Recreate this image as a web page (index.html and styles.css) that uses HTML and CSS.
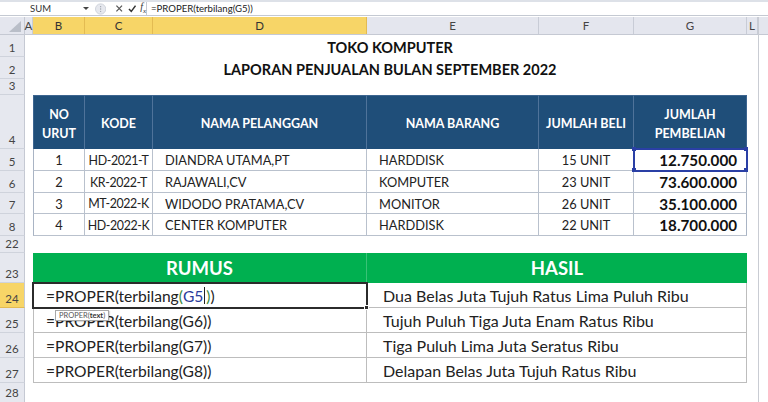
FILE: index.html
```html
<!DOCTYPE html>
<html>
<head>
<meta charset="utf-8">
<link rel="stylesheet" href="styles.css">
</head>
<body>
<div class="fbar">
  <div class="namebox"><span class="nb-text">SUM</span><span class="nb-arrow"></span></div>
  <div class="fbtns">
    <svg class="grip" width="12" height="12" viewBox="0 0 12 12"><circle cx="6" cy="6" r="5.5" fill="#e6e8ee" stroke="#cfd3db"/><circle cx="6" cy="3.5" r="0.7" fill="#9aa0aa"/><circle cx="6" cy="6" r="0.7" fill="#9aa0aa"/><circle cx="6" cy="8.5" r="0.7" fill="#9aa0aa"/></svg>
    <svg class="ico" width="9" height="9" viewBox="0 0 9 9"><path d="M1.5 1.5 L7.5 7.5 M7.5 1.5 L1.5 7.5" stroke="#555" stroke-width="1.3" fill="none"/></svg>
    <svg class="ico" width="9" height="9" viewBox="0 0 9 9"><path d="M1 5 L3.5 7.5 L8 1.5" stroke="#333" stroke-width="1.5" fill="none"/></svg>
    <span class="fx">f<sub>x</sub></span>
  </div>
  <div class="formula">=PROPER(terbilang(G5))</div>
</div>

<div class="sheet">
  <div class="grid">
    <div class="colhdr">
      <div class="corner"><svg width="25" height="18" viewBox="0 0 25 18"><path d="M9 15 L21 15 L21 4 Z" fill="#b9bec8"/></svg></div>
      <div class="ch wA">A</div>
      <div class="ch wB on">B</div>
      <div class="ch wC on">C</div>
      <div class="ch wD on">D</div>
      <div class="ch wE">E</div>
      <div class="ch wF">F</div>
      <div class="ch wG">G</div>
      <div class="ch wL">L</div>
    </div>

    <div class="row h22"><div class="rh">1</div><div class="wA"></div><div class="title wBG">TOKO KOMPUTER</div></div>
    <div class="row h22"><div class="rh">2</div><div class="wA"></div><div class="title wBG">LAPORAN PENJUALAN BULAN SEPTEMBER 2022</div></div>
    <div class="row h16"><div class="rh">3</div></div>

    <div class="row h54">
      <div class="rh">4</div><div class="wA"></div>
      <div class="th wB first">NO<br>URUT</div>
      <div class="th wC">KODE</div>
      <div class="th wD">NAMA PELANGGAN</div>
      <div class="th wE">NAMA BARANG</div>
      <div class="th wF">JUMLAH BELI</div>
      <div class="th wG last">JUMLAH<br>PEMBELIAN</div>
    </div>

    <div class="row h22">
      <div class="rh">5</div><div class="wA"></div>
      <div class="td wB first c">1</div>
      <div class="td wC c code">HD-2021-T</div>
      <div class="td wD l">DIANDRA UTAMA,PT</div>
      <div class="td wE l">HARDDISK</div>
      <div class="td wF c">15 UNIT</div>
      <div class="td wG num ref">12.750.000<span class="hd h1"></span><span class="hd h2"></span><span class="hd h3"></span><span class="hd h4"></span></div>
    </div>
    <div class="row h22">
      <div class="rh">6</div><div class="wA"></div>
      <div class="td wB first c">2</div>
      <div class="td wC c code">KR-2022-T</div>
      <div class="td wD l">RAJAWALI,CV</div>
      <div class="td wE l">KOMPUTER</div>
      <div class="td wF c">23 UNIT</div>
      <div class="td wG num">73.600.000</div>
    </div>
    <div class="row h21">
      <div class="rh">7</div><div class="wA"></div>
      <div class="td wB first c">3</div>
      <div class="td wC c code">MT-2022-K</div>
      <div class="td wD l">WIDODO PRATAMA,CV</div>
      <div class="td wE l">MONITOR</div>
      <div class="td wF c">26 UNIT</div>
      <div class="td wG num">35.100.000</div>
    </div>
    <div class="row h22">
      <div class="rh">8</div><div class="wA"></div>
      <div class="td wB first c">4</div>
      <div class="td wC c code">HD-2022-K</div>
      <div class="td wD l">CENTER KOMPUTER</div>
      <div class="td wE l">HARDDISK</div>
      <div class="td wF c">22 UNIT</div>
      <div class="td wG num">18.700.000</div>
    </div>

    <div class="row h17"><div class="rh">22</div></div>

    <div class="row h30">
      <div class="rh">23</div><div class="wA"></div>
      <div class="gh wBD">RUMUS</div>
      <div class="gh wEG">HASIL</div>
    </div>
    <div class="row h25">
      <div class="rh on">24</div><div class="wA"></div>
      <div class="fc wBD first sel">=PROPER(terbilang<span class="pg">(</span><span class="refc">G5</span><span class="caret"></span><span class="pg">)</span>)<div class="tip">PROPER(<b>text</b>)</div><span class="fill"></span></div>
      <div class="rc wEG">Dua Belas Juta Tujuh Ratus Lima Puluh Ribu</div>
    </div>
    <div class="row h25">
      <div class="rh">25</div><div class="wA"></div>
      <div class="fc wBD first">=PROPER(terbilang(G6))</div>
      <div class="rc wEG">Tujuh Puluh Tiga Juta Enam Ratus Ribu</div>
    </div>
    <div class="row h25">
      <div class="rh">26</div><div class="wA"></div>
      <div class="fc wBD first">=PROPER(terbilang(G7))</div>
      <div class="rc wEG">Tiga Puluh Lima Juta Seratus Ribu</div>
    </div>
    <div class="row h25">
      <div class="rh">27</div><div class="wA"></div>
      <div class="fc wBD first">=PROPER(terbilang(G8))</div>
      <div class="rc wEG">Delapan Belas Juta Tujuh Ratus Ribu</div>
    </div>
    <div class="row h19"><div class="rh">28</div></div>
  </div>
  <div class="edge"><div class="edge-hdr"></div></div>
</div>
</body>
</html>
```
FILE: styles.css
```css
* { box-sizing: border-box; }
body {
  margin: 0;
  width: 768px;
  height: 402px;
  overflow: hidden;
  background: #fff;
  font-family: Lato, "Open Sans", sans-serif;
  color: #222;
}

/* formula bar */
.fbar {
  height: 17px;
  background: #dde1e8;
  padding-top: 2px;
  display: flex;
  border-bottom: 1px solid #fff;
}
.namebox {
  width: 93px;
  background: #fff;
  display: flex;
  align-items: center;
  padding-left: 30px;
  border-bottom: 1px solid #c4c9d2;
}
.nb-text { font-size: 9.5px; color: #333; }
.nb-arrow {
  margin-left: auto;
  margin-right: 4px;
  width: 0; height: 0;
  border-left: 3px solid transparent;
  border-right: 3px solid transparent;
  border-top: 3px solid #444;
}
.fbtns {
  width: 54px;
  display: flex;
  align-items: center;
  gap: 4px;
  padding-left: 2px;
  background: #fff;
  border-bottom: 1px solid #c4c9d2;
  border-right: 1px solid #c4c9d2;
}
.grip { margin-right: 5px; }
.fx { font-family: "Liberation Serif", serif; font-style: italic; font-size: 10px; color: #333; line-height: 1; }
.fx sub { font-size: 7px; }
.formula {
  flex: 1;
  background: #fff;
  font-size: 9.6px;
  padding-left: 4px;
  display: flex;
  align-items: center;
  border-bottom: 1px solid #c4c9d2;
  color: #222;
  white-space: nowrap;
}

/* sheet */
.sheet { display: flex; }
.grid { width: 758px; }
.edge { flex: 1; border-left: 1px solid #c9ccd3; }
.edge-hdr { height: 18px; background: #e4e6ee; border-bottom: 1px solid #c5c9d3; }

.colhdr {
  display: flex;
  height: 18px;
  background: #e4e6ee;
  border-bottom: 1px solid #c5c9d3;
}
.corner { width: 25px; border-right: 1px solid #c5c9d3; }
.corner svg { display: block; }
.ch {
  font-size: 11.5px;
  color: #444;
  display: flex;
  align-items: center;
  justify-content: center;
  border-right: 1px solid #c8ccd6;
}
.ch.on { background: #f7d567; border-right-color: #e3bb52; color: #333; }

.wA { width: 8px; flex: none; }
.wB { width: 52px; flex: none; }
.wC { width: 68px; flex: none; }
.wD { width: 214px; flex: none; }
.wE { width: 172px; flex: none; }
.wF { width: 95px; flex: none; }
.wG { width: 113px; flex: none; }
.wL { width: 11px; flex: none; }
.wBG { width: 714px; flex: none; }
.wBD { width: 334px; flex: none; }
.wEG { width: 380px; flex: none; }

.row { display: flex; white-space: nowrap; }
.h16 { height: 16px; }
.h17 { height: 17px; }
.h19 { height: 19px; }
.h21 { height: 21px; }
.h22 { height: 22px; }
.h25 { height: 25px; }
.h30 { height: 30px; }
.h54 { height: 54px; }

.rh {
  width: 25px;
  flex: none;
  background: #e6e8ef;
  border-right: 1px solid #c5c9d3;
  border-bottom: 1px solid #cfd3dc;
  font-size: 11.5px;
  color: #444;
  display: flex;
  align-items: flex-end;
  justify-content: center;
  line-height: 16px;
}
.h19 .rh { border-bottom: none; line-height: 18px; }
.rh.on { background: #f7d567; border-bottom-color: #e3bb52; }

.title {
  font-weight: 700;
  font-size: 14.5px;
  color: #111;
  display: flex;
  align-items: center;
  justify-content: center;
  padding-top: 3px;
}

/* blue table */
.th {
  background: #1f4e79;
  color: #fff;
  font-weight: 700;
  font-size: 12.5px;
  line-height: 19px;
  text-align: center;
  display: flex;
  align-items: center;
  justify-content: center;
  border-right: 1px solid #4f739a;
  border-top: 1px solid #3d6590;
  padding-top: 2px;
}
.th.first { border-left: 1px solid #3d6590; }
.th.last { border-right: 1px solid #3d6590; }

.td {
  font-size: 12.8px;
  color: #222;
  display: flex;
  align-items: center;
  border-right: 1px solid #b9c1cd;
  border-bottom: 1px solid #b9c1cd;
  padding-top: 1px;
}
.td.first { border-left: 1px solid #a9b4c4; }
.td.c { justify-content: center; }
.td.code { letter-spacing: -0.4px; font-size: 12.4px; }
.td.l { padding-left: 12px; }
.td.num {
  justify-content: flex-end;
  padding-right: 9px;
  font-weight: 700;
  font-size: 15.2px;
  color: #111;
  border-right-color: #a9b4c4;
}
.ref { position: relative; outline: 2px solid #2a3fa5; outline-offset: -1px; }
.hd { position: absolute; width: 4px; height: 4px; background: #2a3fa5; }
.h1 { left: -2px; top: -2px; }
.h2 { right: -2px; top: -2px; }
.h3 { left: -2px; bottom: -2px; }
.h4 { right: -2px; bottom: -2px; }

/* green table */
.gh {
  background: #00b050;
  color: #fff;
  font-weight: 700;
  font-size: 18.5px;
  display: flex;
  align-items: center;
  justify-content: center;
  border-right: 1px solid #39c277;
}
.gh:last-child { border-right: none; }
.fc {
  font-size: 15.6px;
  color: #222;
  display: flex;
  align-items: center;
  padding-left: 12px;
  border-right: 1px solid #bdbdbd;
  border-bottom: 1px solid #bdbdbd;
  padding-top: 1px;
}
.fc.first { border-left: 1px solid #bdbdbd; }
.rc {
  font-size: 16px;
  color: #222;
  display: flex;
  align-items: center;
  padding-left: 16px;
  border-right: 1px solid #bdbdbd;
  border-bottom: 1px solid #bdbdbd;
  padding-top: 1px;
}
.sel { position: relative; outline: 2px solid #2b2b2b; outline-offset: -1px; }
.refc { color: #2c3c9c; }
.pg { color: #3b8a3b; }
.caret { display: inline-block; width: 1px; height: 17px; background: #222; margin: 0 1px 0 1px; }
.fill { position: absolute; right: -3px; bottom: -3px; width: 5px; height: 5px; background: #2b2b2b; border: 1px solid #fff; }
.tip {
  position: absolute;
  left: 21px;
  top: 27px;
  height: 11px;
  padding: 0 3px;
  background: #fff;
  border: 1px solid #a8a8a8;
  font-size: 7.5px;
  line-height: 9px;
  color: #555;
  z-index: 2;
  box-shadow: 1px 1px 1px rgba(0,0,0,0.15);
}
.tip b { color: #333; }
```
